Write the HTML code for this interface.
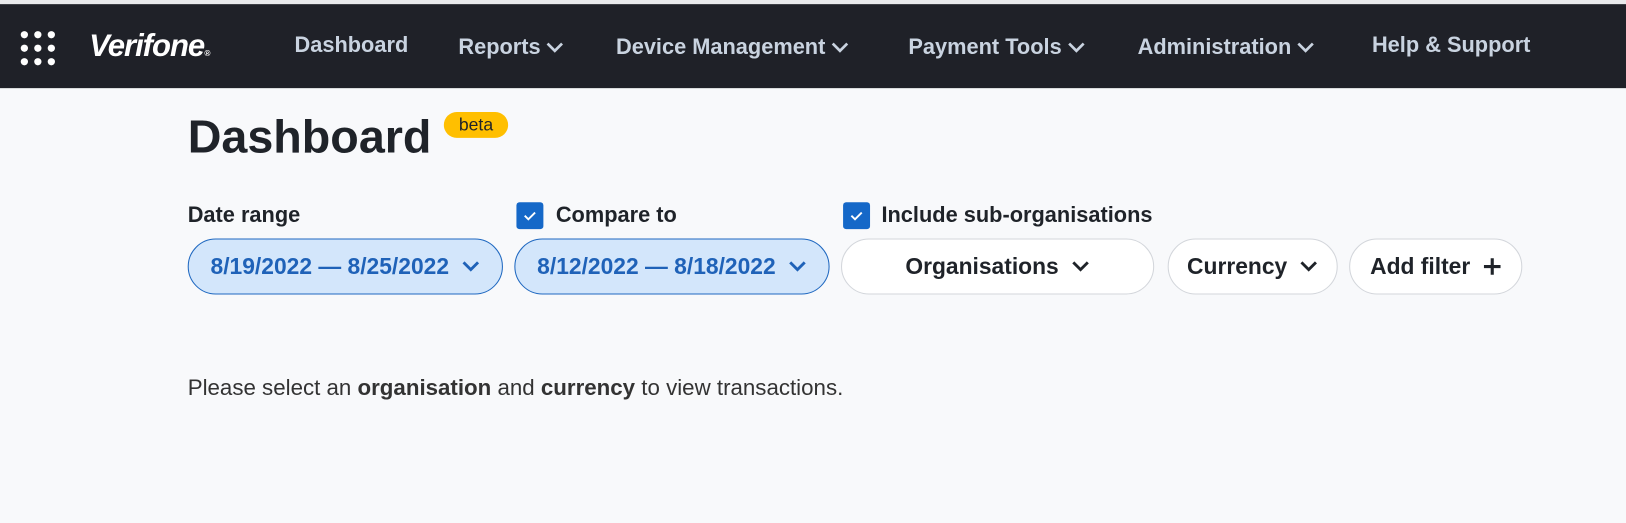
<!DOCTYPE html>
<html><head><style>
*{box-sizing:border-box;margin:0;padding:0}
html,body{width:1626px;height:522px;overflow:hidden;background:#f8f9fb}
body{font-family:"Liberation Sans",sans-serif;color:#1f2329}
.wrap{position:absolute;left:0;top:0;width:1568px;height:504px;transform:scale(1.037);transform-origin:0 0}
.top{position:absolute;left:0;top:0;width:1568px;height:4px;background:#e9eaec}
.nav{position:absolute;left:0;top:4px;width:1568px;height:81px;background:#1f2128}
.dots{position:absolute;left:20px;top:26px;width:34px;height:34px}
.dots i{position:absolute;width:7px;height:7px;border-radius:50%;background:#fff}
.logo{position:absolute;left:86px;top:24px;color:#fff;font-size:30px;font-weight:bold;font-style:italic;letter-spacing:-1px}
.ni{position:absolute;top:30px;color:#c9d3e0;font-size:21px;font-weight:bold;white-space:nowrap}
.ni svg{vertical-align:middle;margin-left:5px}
h1{position:absolute;left:181px;top:106px;font-size:45px;font-weight:bold;color:#1f2329}
.beta{position:absolute;left:428px;top:108px;width:62px;height:25px;border-radius:13px;background:#ffbf00;font-size:17px;text-align:center;line-height:25px;color:#1f2329}
.lbl{position:absolute;top:196px;font-size:21px;font-weight:bold;color:#1f2329}
.cb{position:absolute;top:195px;width:26px;height:26px;background:#1568c8;border-radius:3px}
.pill{position:absolute;top:230px;height:54px;border-radius:27px;font-size:22px;font-weight:bold;display:flex;align-items:center;justify-content:center;white-space:nowrap}
.blue{background:#d3e6fb;border:1px solid #1f68c0;color:#1f62b8}
.white{background:#fff;border:1px solid #d3d6db;color:#1f2329}
.pill svg{margin-left:12px}
.msg{position:absolute;left:181px;top:362px;font-size:21.5px;color:#333}
</style></head><body><div class="wrap">
<div class="top"></div>
<div class="nav">
<div class="dots"><i style="left:0;top:0"></i><i style="left:13px;top:0"></i><i style="left:26px;top:0"></i><i style="left:0;top:13px"></i><i style="left:13px;top:13px"></i><i style="left:26px;top:13px"></i><i style="left:0;top:26px"></i><i style="left:13px;top:26px"></i><i style="left:26px;top:26px"></i></div>
<div class="logo">Verifone<span style="font-size:8px">®</span></div>
<div class="ni" style="left:284px;top:28px">Dashboard</div>
<div class="ni" style="left:442px">Reports<svg width="18" height="12" viewBox="0 0 18 12"><path d="M2 2l7 7 7-7" stroke="#c9d3e0" stroke-width="2.6" fill="none"/></svg></div>
<div class="ni" style="left:594px">Device Management<svg width="18" height="12" viewBox="0 0 18 12"><path d="M2 2l7 7 7-7" stroke="#c9d3e0" stroke-width="2.6" fill="none"/></svg></div>
<div class="ni" style="left:876px">Payment Tools<svg width="18" height="12" viewBox="0 0 18 12"><path d="M2 2l7 7 7-7" stroke="#c9d3e0" stroke-width="2.6" fill="none"/></svg></div>
<div class="ni" style="left:1097px">Administration<svg width="18" height="12" viewBox="0 0 18 12"><path d="M2 2l7 7 7-7" stroke="#c9d3e0" stroke-width="2.6" fill="none"/></svg></div>
<div class="ni" style="left:1323px;top:28px">Help &amp; Support</div>
</div>
<h1>Dashboard</h1>
<div class="beta">beta</div>
<div class="lbl" style="left:181px">Date range</div>
<div class="cb" style="left:498px"><svg width="26" height="26" viewBox="0 0 26 26"><path d="M8 13l3.5 3.5L18 10" stroke="#fff" stroke-width="1.8" fill="none"/></svg></div>
<div class="lbl" style="left:536px">Compare to</div>
<div class="cb" style="left:813px"><svg width="26" height="26" viewBox="0 0 26 26"><path d="M8 13l3.5 3.5L18 10" stroke="#fff" stroke-width="1.8" fill="none"/></svg></div>
<div class="lbl" style="left:850px">Include sub-organisations</div>
<div class="pill blue" style="left:181px;width:304px">8/19/2022 — 8/25/2022<svg width="18" height="12" viewBox="0 0 18 12"><path d="M2 2l7 7 7-7" stroke="#1f62b8" stroke-width="2.8" fill="none"/></svg></div>
<div class="pill blue" style="left:496px;width:304px">8/12/2022 — 8/18/2022<svg width="18" height="12" viewBox="0 0 18 12"><path d="M2 2l7 7 7-7" stroke="#1f62b8" stroke-width="2.8" fill="none"/></svg></div>
<div class="pill white" style="left:811px;width:302px">Organisations<svg width="18" height="12" viewBox="0 0 18 12"><path d="M2 2l7 7 7-7" stroke="#1f2329" stroke-width="2.8" fill="none"/></svg></div>
<div class="pill white" style="left:1126px;width:164px">Currency<svg width="18" height="12" viewBox="0 0 18 12"><path d="M2 2l7 7 7-7" stroke="#1f2329" stroke-width="2.8" fill="none"/></svg></div>
<div class="pill white" style="left:1301px;width:167px">Add filter<svg width="18" height="18" viewBox="0 0 18 18"><path d="M9 1v16M1 9h16" stroke="#1f2329" stroke-width="3" fill="none"/></svg></div>
<div class="msg">Please select an <b>organisation</b> and <b>currency</b> to view transactions.</div>
</div></body></html>
